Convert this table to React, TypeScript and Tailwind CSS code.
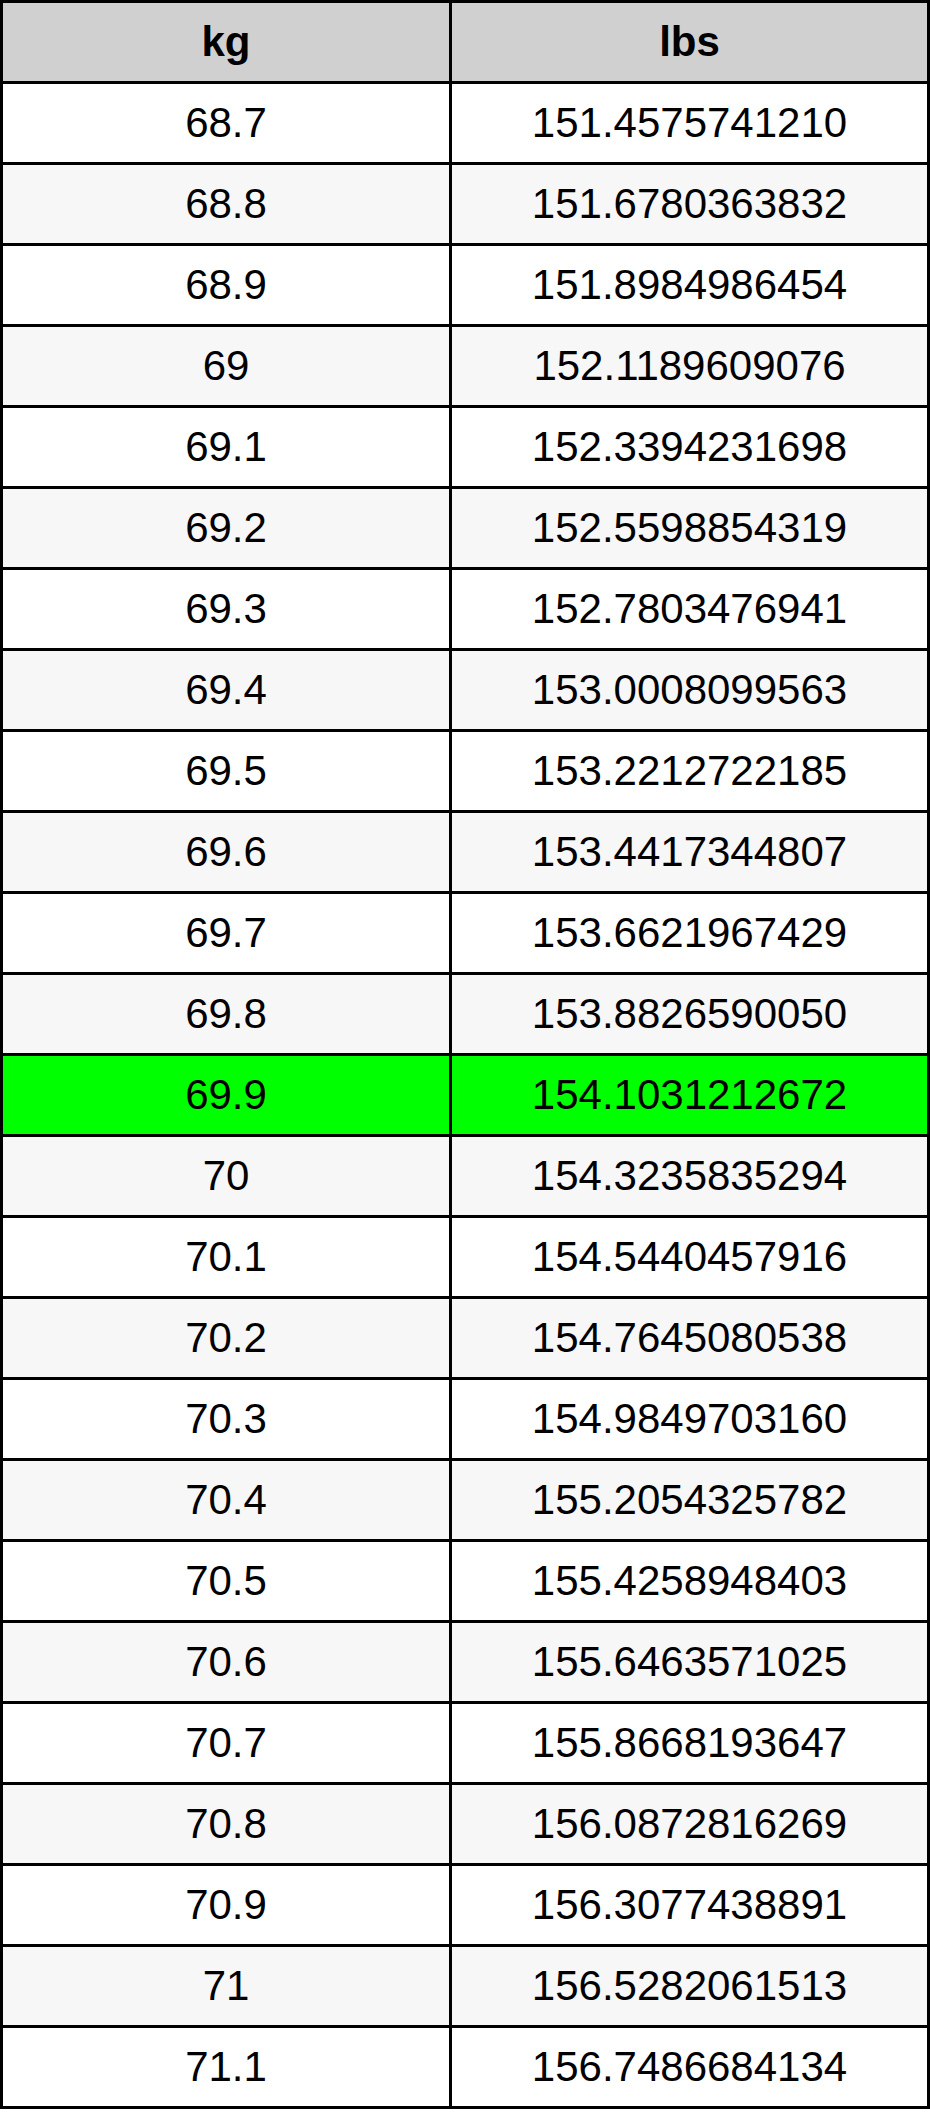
import React from "react";

const rows: [string, string][] = [
  ["68.7", "151.4575741210"],
  ["68.8", "151.6780363832"],
  ["68.9", "151.8984986454"],
  ["69", "152.1189609076"],
  ["69.1", "152.3394231698"],
  ["69.2", "152.5598854319"],
  ["69.3", "152.7803476941"],
  ["69.4", "153.0008099563"],
  ["69.5", "153.2212722185"],
  ["69.6", "153.4417344807"],
  ["69.7", "153.6621967429"],
  ["69.8", "153.8826590050"],
  ["69.9", "154.1031212672"],
  ["70", "154.3235835294"],
  ["70.1", "154.5440457916"],
  ["70.2", "154.7645080538"],
  ["70.3", "154.9849703160"],
  ["70.4", "155.2054325782"],
  ["70.5", "155.4258948403"],
  ["70.6", "155.6463571025"],
  ["70.7", "155.8668193647"],
  ["70.8", "156.0872816269"],
  ["70.9", "156.3077438891"],
  ["71", "156.5282061513"],
  ["71.1", "156.7486684134"],
];

export default function App() {
  return (
    <div className="w-[930px] min-h-[2115px] bg-white text-black font-['Liberation_Sans',Arial,sans-serif]">
      <div className="w-[930px] border-[3px] border-black">
        <div className="grid grid-cols-[446px_478px] bg-[#d0d0d0] font-bold text-[42px] leading-[78px] text-center">
          <div className="h-[78px]">kg</div>
          <div className="h-[78px] border-l-[3px] border-black">lbs</div>
        </div>
        {rows.map(([kg, lbs], i) => {
          const bg = kg === "69.9" ? "bg-[#00ff00]" : i % 2 === 0 ? "bg-white" : "bg-[#f7f7f7]";
          return (
            <div
              key={kg}
              className={`grid grid-cols-[446px_478px] border-t-[3px] border-black text-[42px] leading-[78px] text-center ${bg}`}
            >
              <div className="h-[78px]">{kg}</div>
              <div className="h-[78px] border-l-[3px] border-black">{lbs}</div>
            </div>
          );
        })}
      </div>
    </div>
  );
}
